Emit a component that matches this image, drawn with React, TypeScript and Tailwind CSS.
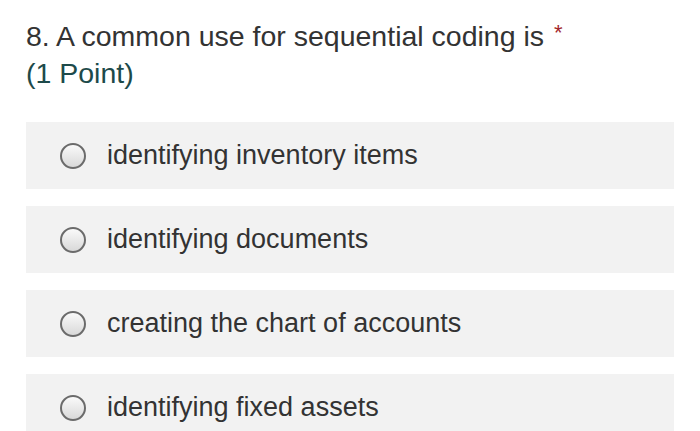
const options = [
  "identifying inventory items",
  "identifying documents",
  "creating the chart of accounts",
  "identifying fixed assets",
];

function Radio() {
  return (
    <span className="h-[26px] w-[26px] shrink-0 rounded-full border-[2px] border-[#6b6b6b] bg-gradient-to-b from-[#fafafa] to-[#d9d9d9]" />
  );
}

export default function App() {
  return (
    <div className="h-[431px] w-[700px] overflow-hidden bg-white font-['Liberation_Sans',Arial,sans-serif]">
      <div className="pl-[26px] pt-[18px]">
        <div className="flex items-start text-[28.5px] leading-[37px] text-[#333333]">
          <span>8. A common use for sequential coding is</span>
          <span className="ml-[10px] text-[22px] leading-[30px] text-[#a4262c]">*</span>
        </div>
        <div className="text-[28.5px] leading-[37px] text-[#1d4a4a]">(1 Point)</div>
      </div>
      <div className="mt-[30px] flex flex-col gap-[17px] pl-[26px] pr-[26px]">
        {options.map((o) => (
          <div key={o} className="flex h-[67px] items-center bg-[#f2f2f2] pl-[34px]">
            <Radio />
            <span className="ml-[21px] text-[27px] text-[#333333]">{o}</span>
          </div>
        ))}
      </div>
    </div>
  );
}
